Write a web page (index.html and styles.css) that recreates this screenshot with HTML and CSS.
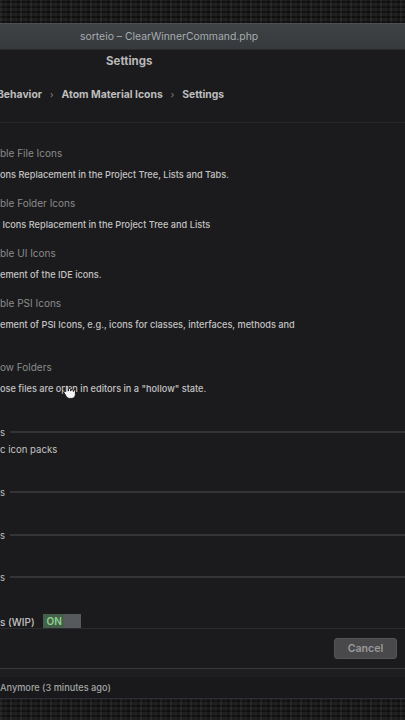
FILE: index.html
```html
<!DOCTYPE html>
<html lang="en">
<head>
<meta charset="utf-8">
<link rel="stylesheet" href="styles.css">
</head>
<body>
<div class="texture top"></div>
<div class="window">
  <div class="titlebar"><span class="title-text">sorteio – ClearWinnerCommand.php</span></div>
  <div class="dialog">
    <div class="dialog-title">Settings</div>
    <div class="breadcrumb">
      <span class="first">Behavior</span><span class="sep">›</span><span>Atom Material Icons</span><span class="sep">›</span><span>Settings</span>
    </div>
    <div class="content">
      <div class="item">
        <div class="label">ble File Icons</div>
        <div class="desc">ons Replacement in the Project Tree, Lists and Tabs.</div>
      </div>
      <div class="item">
        <div class="label">ble Folder Icons</div>
        <div class="desc">&nbsp;Icons Replacement in the Project Tree and Lists</div>
      </div>
      <div class="item">
        <div class="label">ble UI Icons</div>
        <div class="desc">ement of the IDE icons.</div>
      </div>
      <div class="item">
        <div class="label">ble PSI Icons</div>
        <div class="desc">ement of PSI Icons, e.g., icons for classes, interfaces, methods and</div>
        <div class="desc short">&nbsp;</div>
      </div>
      <div class="item hollow">
        <div class="label">ow Folders</div>
        <div class="desc">ose files are open in editors in a "hollow" state.</div>
        <svg class="cursor" width="13" height="15" viewBox="0 0 13 15"><path d="M4 1.2c.7 0 1.2.5 1.2 1.2V7h.3V5.6c0-.7.5-1.1 1.1-1.1s1.1.4 1.1 1.1V7h.3V6.2c0-.6.5-1 1.1-1s1 .4 1 1V7.4h.3V7c0-.6.4-1 1-1s1 .4 1 1v3.6c0 2.1-1.5 3.8-3.6 3.8H6.5c-1.3 0-2.3-.6-3-1.7L1 8.8c-.3-.5-.2-1.1.3-1.4.5-.3 1.1-.2 1.4.2l.1.1V2.4c0-.7.5-1.2 1.2-1.2z" fill="#f4f4f4" stroke="#111" stroke-width="0.9"/></svg>
      </div>
      <div class="group g1">
        <div class="group-head"><span>s</span><i class="rule"></i></div>
        <div class="group-text">c icon packs</div>
      </div>
      <div class="group g2">
        <div class="group-head"><span>s</span><i class="rule"></i></div>
      </div>
      <div class="group g3">
        <div class="group-head"><span>s</span><i class="rule"></i></div>
      </div>
      <div class="group g4">
        <div class="group-head"><span>s</span><i class="rule"></i></div>
      </div>
      <div class="wip-row">
        <span class="wip-label">s (WIP)</span>
        <span class="toggle"><span class="on">ON</span></span>
      </div>
    </div>
    <div class="footer">
      <button class="cancel">Cancel</button>
    </div>
  </div>
  <div class="gap-band"></div>
  <div class="statusbar">Anymore (3 minutes ago)</div>
</div>
<div class="texture bottom"></div>
</body>
</html>
```
FILE: styles.css
```css
* { box-sizing: border-box; }
html, body { margin: 0; padding: 0; }
body {
  width: 405px;
  height: 720px;
  overflow: hidden;
  background: #141414;
  font-family: Inter, "Noto Sans", "Liberation Sans", sans-serif;
}
.texture {
  background-color: #171717;
  background-image:
    repeating-linear-gradient(90deg, rgba(255,255,255,0.05) 0 2px, rgba(0,0,0,0) 2px 5px, rgba(255,255,255,0.02) 5px 7px, rgba(0,0,0,0.15) 7px 10px),
    repeating-linear-gradient(0deg, rgba(0,0,0,0.25) 0 2px, rgba(255,255,255,0.03) 2px 5px);
}
.texture.top { height: 23px; }
.texture.bottom { flex: 1; min-height: 23px; }

.window { display: flex; flex-direction: column; }

.titlebar {
  height: 27px;
  background: linear-gradient(#3e4245, #373a3d);
  border-top: 1px solid #4a4e52;
  border-bottom: 1px solid #2a2c2e;
  display: flex;
  align-items: center;
  padding-left: 80px;
}
.title-text { color: #a7abaf; font-size: 10.4px; }

.dialog {
  background: #1b1b1d;
  display: flex;
  flex-direction: column;
}
.dialog-title {
  height: 22px;
  padding-left: 106px;
  padding-top: 4px;
  color: #b9b9b9;
  font-weight: 700;
  font-size: 11.5px;
}
.breadcrumb {
  margin-top: 14px;
  height: 16px;
  display: flex;
  align-items: center;
  color: #bdbdbd;
  font-weight: 700;
  font-size: 10.4px;
  margin-left: -3px;
}
.breadcrumb .sep { color: #8a8a8a; font-weight: 400; margin: 0 8px; font-size: 9px; }

.content {
  margin-top: 20px;
  border-top: 1px solid #26272a;
  padding-top: 21px;
  display: flex;
  flex-direction: column;
}
.item { display: flex; flex-direction: column; position: relative; margin-bottom: 8px; }
.label { height: 21px; line-height: 18px; color: #8b8b8b; font-size: 10px; }
.desc { height: 21px; line-height: 20px; color: #c3c3c3; font-size: 9.2px; font-weight: 500; white-space: nowrap; }
.desc.short { height: 14px; }
.cursor { position: absolute; left: 63px; top: 26px; }
.hollow { margin-bottom: 25px; }

.group { display: flex; flex-direction: column; }
.group-head { height: 14px; display: flex; align-items: center; gap: 5px; color: #bdbdbd; font-size: 9.5px; }
.rule { flex: 1; height: 2px; background: #333437; }
.group-text { height: 22px; line-height: 22px; color: #c3c3c3; font-size: 9.6px; }
.g1 { margin-bottom: 24px; }
.g2 { margin-bottom: 29px; }
.g3 { margin-bottom: 28px; }
.g4 { margin-bottom: 32px; }

.wip-row {
  height: 13px;
  display: flex;
  align-items: center;
  gap: 8px;
  color: #c3c3c3;
  font-size: 10px;
  font-weight: 500;
  border-bottom: 1px solid #2b2c2f;
}
.wip-label { line-height: 13px; }
.toggle {
  width: 38px;
  height: 14px;
  margin-top: -2px;
  background: linear-gradient(90deg, #44604a 0, #44604a 55%, #575a5c 55%, #575a5c 100%);
  display: flex;
  align-items: center;
  padding-left: 4px;
}
.on { color: #8fd08f; font-size: 10px; font-weight: 600; }

.footer {
  height: 40px;
  display: flex;
  justify-content: flex-end;
  align-items: center;
  padding-right: 8px;
  border-bottom: 1px solid #38393c;
}
.cancel {
  width: 63px;
  height: 21px;
  background: #49494b;
  border: 1px solid #555557;
  border-radius: 3px;
  color: #9a9a9a;
  font-family: inherit;
  font-size: 10.6px;
  font-weight: 600;
  padding: 0;
}
.gap-band { height: 8px; background: #1e1e20; }
.statusbar {
  height: 22px;
  line-height: 22px;
  background: #19191b;
  border-bottom: 1px solid #2c2d30;
  color: #a5a5a5;
  font-size: 9.2px;
  font-weight: 500;
}
```
